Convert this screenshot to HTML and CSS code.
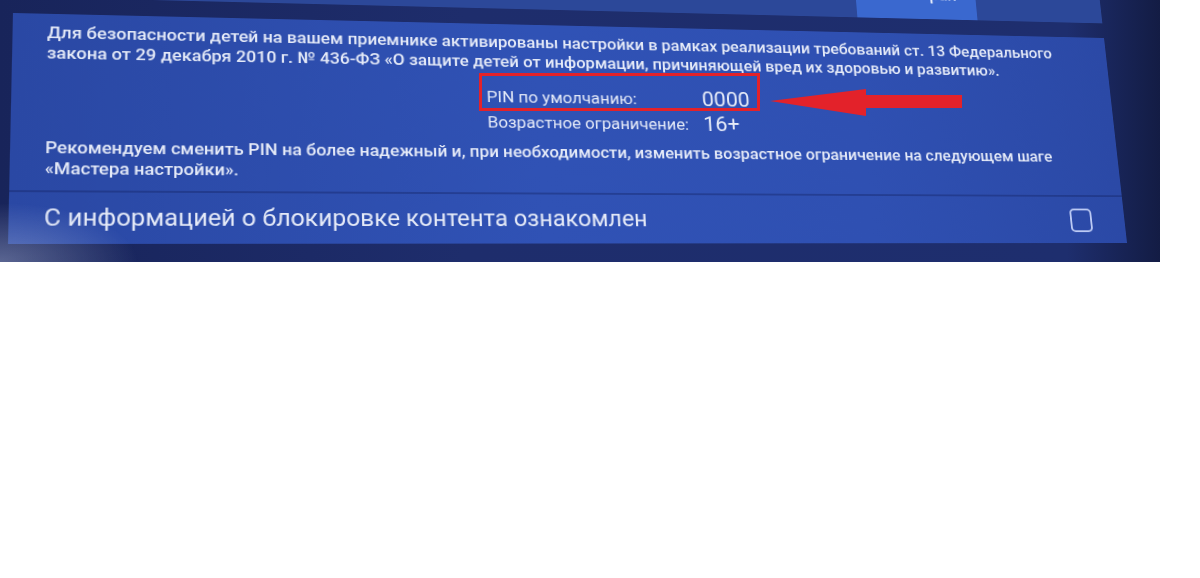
FILE: index.html
```html
<!DOCTYPE html>
<html lang="ru">
<head>
<meta charset="utf-8">
<title>Мастер настройки — Родительский контроль</title>
<link rel="stylesheet" href="styles.css">
</head>
<body>
  <div class="frame">
    <div class="screen">
      <div class="topbar">
        <div class="topbar-fill"></div>
        <div class="topbar-btn">Телеэкран</div>
        <div class="topbar-fill"></div>
      </div>
      <div class="panel">
        <p class="notice">Для безопасности детей на вашем приемнике активированы настройки в рамках реализации требований ст. 13 Федерального<br>закона от 29 декабря 2010 г. № 436-ФЗ «О защите детей от информации, причиняющей вред их здоровью и развитию».</p>
        <div class="pin-grid">
          <span class="pin-label">PIN по умолчанию:</span>
          <span class="pin-value">0000</span>
          <span class="pin-label">Возрастное ограничение:</span>
          <span class="pin-value">16+</span>
        </div>
        <p class="notice advice">Рекомендуем сменить PIN на более надежный и, при необходимости, изменить возрастное ограничение на следующем шаге<br>«Мастера настройки».</p>
        <label class="confirm">
          <span class="confirm-text">С информацией о блокировке контента ознакомлен</span>
          <span class="checkbox"></span>
        </label>
      </div>
    </div>
    <div class="mark-box"></div>
    <svg class="mark-arrow" width="200" height="36" viewBox="0 0 200 36">
      <polygon points="5,17 101,5 101,11 197,11 197,24 101,24 101,32" fill="#e3222a"/>
    </svg>
  </div>
</body>
</html>
```
FILE: styles.css
```css
html, body {
  margin: 0;
  padding: 0;
  background: #ffffff;
}

body {
  font-family: Roboto, "Noto Sans", "Liberation Sans", sans-serif;
}

/* dark bezel around the TV picture */
.frame {
  position: relative;
  width: 1160px;
  height: 262px;
  overflow: hidden;
  background: linear-gradient(90deg, #18245a 0, #1e2d6c 40%, #1e2e6e 92%, #131c44 100%);
}

/* soft glare in the lower-left corner of the photo */
.frame::after {
  content: "";
  position: absolute;
  left: 0;
  bottom: 0;
  width: 140px;
  height: 60px;
  background: radial-gradient(ellipse at 0% 100%, rgba(190, 200, 230, 0.4), rgba(190, 200, 230, 0) 70%);
  pointer-events: none;
}

/* screen plane seen at an angle: panel corners land on the tilted TV image */
.screen {
  width: 1100px;
  transform-origin: 0 0;
  transform: matrix3d(1.118974, 0.027104, 0, 0.000115177,
                      -0.022504, 0.966634, 0, -0.000119078,
                      0, 0, 1, 0,
                      13, 13, 0, 1) translateY(-67px);
}

.topbar {
  display: grid;
  grid-template-columns: 829px 131px 1fr;
  height: 50px;
  margin-bottom: 17px;
}

.topbar-fill {
  background: #2c4899;
}

.topbar-btn {
  display: flex;
  align-items: flex-end;
  justify-content: center;
  box-sizing: border-box;
  padding-bottom: 19px;
  background: #3a68cf;
  color: #e8eefc;
  font-weight: 500;
  font-size: 18px;
  line-height: 1;
}

.panel {
  display: flex;
  flex-direction: column;
  box-sizing: border-box;
  width: 1100px;
  height: 232px;
  padding: 9px 36px 0 31px;
  background: linear-gradient(90deg, #2a48a4 0, #3052b5 45%, #2f50b2 75%, #2b49a6 100%);
  color: #e6ebf8;
  filter: blur(0.3px);
}

.notice {
  margin: 0;
  font-weight: 500;
  font-size: 16.7px;
  line-height: 21px;
  white-space: nowrap;
}

.pin-grid {
  display: grid;
  grid-template-columns: 216px auto;
  grid-auto-rows: 27px;
  align-items: center;
  margin: 13px 0 0 412px;
}

.pin-label {
  font-size: 16.8px;
  font-weight: 400;
}

.pin-value {
  font-size: 22px;
  font-weight: 400;
}

.advice {
  margin-top: 8px;
}

/* full-width row under a thin separator */
.confirm {
  flex: 1;
  display: flex;
  align-items: center;
  justify-content: space-between;
  margin: 11px -36px 0 -31px;
  padding: 0 36px 0 31px;
  border-top: 2px solid rgba(20, 34, 100, 0.4);
}

.confirm-text {
  font-size: 23px;
  font-weight: 400;
}

.checkbox {
  width: 24px;
  height: 26px;
  box-sizing: border-box;
  border: 2px solid #bccaf4;
  border-radius: 5px;
}

/* red annotation drawn over the photo */
.mark-box {
  position: absolute;
  left: 479px;
  top: 73px;
  width: 281px;
  height: 38px;
  box-sizing: border-box;
  border: 3px solid #e3222a;
}

.mark-arrow {
  position: absolute;
  left: 765px;
  top: 84px;
}
```
